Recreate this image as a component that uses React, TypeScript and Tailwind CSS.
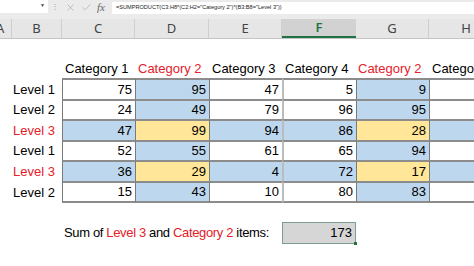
import React from "react";
import { X, Check } from "lucide-react";

type Row = { label: string; hl: boolean; v: number[] };

const rows: Row[] = [
  { label: "Level 1", hl: false, v: [75, 95, 47, 5, 9] },
  { label: "Level 2", hl: false, v: [24, 49, 79, 96, 95] },
  { label: "Level 3", hl: true, v: [47, 99, 94, 86, 28] },
  { label: "Level 1", hl: false, v: [52, 55, 61, 65, 94] },
  { label: "Level 3", hl: true, v: [36, 29, 4, 72, 17] },
  { label: "Level 2", hl: false, v: [15, 43, 10, 80, 83] },
];

const rowH = ["h-[21px]", "h-[20px]", "h-[21px]", "h-[20px]", "h-[21px]", "h-[22px]"];

const colW = ["w-[73px]", "w-[74px]", "w-[73px]", "w-[74px]", "w-[73px]", "w-[74px]"];
const colL = [
  "border-l border-l-[#7a7a7a]",
  "border-l border-l-[#7a7a7a]",
  "border-l border-l-[#7a7a7a]",
  "border-l-2 border-l-[#bcbcbc]",
  "border-l border-l-[#7a7a7a]",
  "border-l border-l-[#7a7a7a]",
];

const RED = "text-[#e5202a]";

function cellBg(col: number, hl: boolean) {
  const special = col === 1 || col === 4;
  if (special) return hl ? "bg-[#ffe699]" : "bg-[#bdd7ee]";
  return hl ? "bg-[#bdd7ee]" : "bg-white";
}

const headers = [
  { l: "B", w: "w-[50px]" },
  { l: "C", w: "w-[73px]" },
  { l: "D", w: "w-[74px]" },
  { l: "E", w: "w-[73px]" },
];

export default function App() {
  return (
    <div className="w-[474px] h-[266px] overflow-hidden bg-white font-['Liberation_Sans',Arial,sans-serif] text-[13px] text-black">
      {/* formula bar */}
      <div className="h-[19px] bg-[#ebebeb] flex items-start">
        <div className="mt-[0px] w-[48px] h-[13px] bg-white relative shrink-0">
          <span className="absolute right-[3px] top-[3px] text-[5px] leading-none text-[#444]">▼</span>
        </div>
        <div className="w-[14px] h-[13px] flex items-center justify-center text-[8px] text-[#a0a0a0] shrink-0">⋮</div>
        <div className="w-[50px] h-[14px] flex items-center gap-[5px] pl-[3px] shrink-0">
          <X size={11} strokeWidth={1.2} className="text-[#9a9a9a]" />
          <Check size={11} strokeWidth={1.2} className="text-[#9a9a9a]" />
          <span className="font-['Liberation_Serif',serif] italic text-[11px] leading-none text-[#666]">fx</span>
        </div>
        <div className="mt-[2px] h-[12px] flex-1 bg-white flex items-center pl-[4px] overflow-hidden">
          <span className="text-[5.6px] leading-none whitespace-nowrap text-[#222]">
            =SUMPRODUCT(C3:H8*(C2:H2="Category 2")*(B3:B8="Level 3"))
          </span>
        </div>
      </div>

      {/* column headers */}
      <div className="h-[20px] flex bg-[#e6e6e6] border-b border-b-[#c4c4c4] font-['Noto_Sans',sans-serif] text-[13px] text-[#444] leading-none">
        <div className="w-[12px] shrink-0 border-r border-r-[#cfcfcf] overflow-hidden flex items-center">
          <span className="-ml-[4px]">A</span>
        </div>
        {headers.map((h) => (
          <div key={h.l} className={`${h.w} shrink-0 border-r border-r-[#cfcfcf] flex items-center justify-center`}>
            {h.l}
          </div>
        ))}
        <div className="w-[74px] shrink-0 bg-[#d2d2d2] border-b-2 border-b-[#217346] flex items-center justify-center text-[#217346] font-semibold">
          F
        </div>
        <div className="w-[73px] shrink-0 border-r border-r-[#cfcfcf] flex items-center justify-center">G</div>
        <div className="w-[74px] shrink-0 flex items-center justify-center">H</div>
      </div>

      {/* empty row */}
      <div className="h-[20px]" />

      {/* category row */}
      <div className="h-[19px] flex items-center whitespace-nowrap">
        <div className="w-[62px] shrink-0" />
        <div className="w-[73px] shrink-0 pl-[3px]">Category 1</div>
        <div className={`w-[74px] shrink-0 pl-[3px] ${RED}`}>Category 2</div>
        <div className="w-[73px] shrink-0 pl-[3px]">Category 3</div>
        <div className="w-[74px] shrink-0 pl-[3px]">Category 4</div>
        <div className={`w-[73px] shrink-0 pl-[2px] ${RED}`}>Category 2</div>
        <div className="w-[74px] shrink-0 pl-[3px]">Category 5</div>
      </div>

      {/* data rows */}
      {rows.map((r, i) => (
        <div key={i} className={`${rowH[i]} flex`}>
          <div className="w-[12px] shrink-0" />
          <div className={`w-[50px] shrink-0 flex items-center pl-[1px] pt-[2px] ${r.hl ? RED : ""}`}>
            {r.label}
          </div>
          {[0, 1, 2, 3, 4, 5].map((c) => (
            <div
              key={c}
              className={`${colW[c]} ${colL[c]} shrink-0 border-t-2 border-t-[#8c8c8c] ${
                i === 5 ? "border-b-2 border-b-[#8c8c8c]" : ""
              } ${cellBg(c, r.hl)} flex items-center justify-end pr-[3px]`}
            >
              {c < 5 ? r.v[c] : ""}
            </div>
          ))}
        </div>
      ))}

      {/* empty row */}
      <div className="h-[20px]" />

      {/* sum row */}
      <div className="h-[20px] flex items-center whitespace-nowrap">
        <div className="w-[62px] shrink-0" />
        <div className="w-[220px] shrink-0 pl-[2px] tracking-[-0.35px]">
          Sum of <span className={RED}>Level 3</span> and <span className={RED}>Category 2</span> items:
        </div>
        <div className="relative w-[74px] h-[22px] shrink-0 bg-[#d6d6d6] border border-[#7f9d8c] flex items-center justify-end pr-[3px]">
          173
          <span className="absolute -right-[2px] -bottom-[2px] w-[3px] h-[3px] bg-[#217346]" />
        </div>
      </div>
    </div>
  );
}
